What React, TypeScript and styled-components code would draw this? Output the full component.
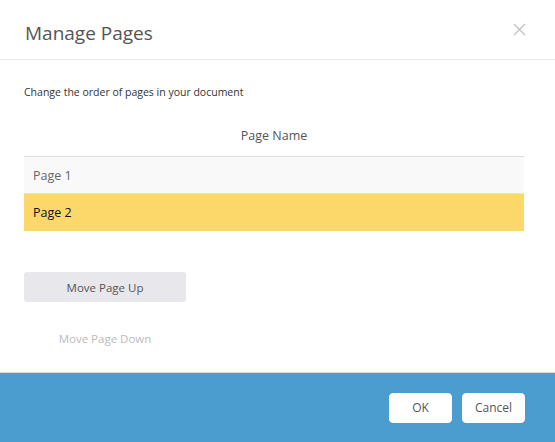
import React, { useState } from 'react';
import styled, { createGlobalStyle } from 'styled-components';

const GlobalStyle = createGlobalStyle`
  html, body {
    margin: 0;
    padding: 0;
    background: #ffffff;
  }

  body {
    font-family: 'Open Sans', 'Noto Sans', sans-serif;
  }
`;

const Dialog = styled.div`
  display: flex;
  flex-direction: column;
  height: 442px;
  width: 555px;
`;

const Header = styled.header`
  align-items: center;
  border-bottom: 1px solid #e9e9e9;
  display: flex;
  height: 60px;
  justify-content: space-between;
  padding: 0 29px 0 25px;
  box-sizing: border-box;
`;

const Title = styled.h1`
  color: #555555;
  font-size: 19px;
  font-weight: 400;
  margin: 0;
  padding-top: 6px;
`;

const CloseButton = styled.button`
  background: none;
  border: none;
  cursor: pointer;
  display: flex;
  padding: 0;
`;

const Body = styled.section`
  display: flex;
  flex: 1;
  flex-direction: column;
  padding: 0 31px 0 24px;
`;

const Description = styled.p`
  color: #333333;
  font-size: 10.5px;
  margin: 25px 0 0;
`;

const Table = styled.div`
  display: flex;
  flex-direction: column;
  margin-top: 28px;
`;

const HeadCell = styled.div`
  border-bottom: 1px solid #dddddd;
  color: #555555;
  font-size: 12.5px;
  padding-bottom: 12px;
  text-align: center;
`;

const Row = styled.div<{ selected?: boolean }>`
  align-items: center;
  background: ${props => (props.selected ? '#fcd86b' : '#f9f9f9')};
  border-bottom: 1px solid ${props => (props.selected ? '#fcd86b' : '#e2e2e2')};
  color: ${props => (props.selected ? '#111111' : '#666666')};
  cursor: pointer;
  display: flex;
  font-size: 12.5px;
  height: 36px;
  padding-left: 9px;
`;

const Actions = styled.div`
  display: flex;
  flex-direction: column;
  gap: 21px;
  margin-top: 41px;
  width: 162px;
`;

const ActionButton = styled.button<{ disabled?: boolean }>`
  background: ${props => (props.disabled ? 'transparent' : '#e8e7ec')};
  border: none;
  border-radius: 3px;
  color: ${props => (props.disabled ? '#bbbbbb' : '#555555')};
  font-family: inherit;
  font-size: 11.5px;
  height: 30px;
  padding: 0;
`;

const Footer = styled.footer`
  align-items: center;
  background: #4b9ccf;
  border-top: 1px solid #d9d9d9;
  display: flex;
  gap: 10px;
  height: 70px;
  justify-content: flex-end;
  padding-right: 30px;
  box-sizing: border-box;
`;

const FooterButton = styled.button`
  background: #ffffff;
  border: 1px solid #ffffff;
  border-radius: 4px;
  color: #555555;
  font-family: inherit;
  font-size: 12px;
  height: 30px;
  padding: 0;
  width: 63px;
`;

const pages = ['Page 1', 'Page 2'];

const App: React.FC = () => {
  const [selected, setSelected] = useState<number>(1);

  return (
    <Dialog>
      <GlobalStyle />
      <Header>
        <Title>Manage Pages</Title>
        <CloseButton aria-label="Close">
          <svg width="13" height="13" viewBox="0 0 13 13">
            <path d="M1 1 L12 12 M12 1 L1 12" stroke="#c4c4c4" strokeWidth="1.4" />
          </svg>
        </CloseButton>
      </Header>
      <Body>
        <Description>Change the order of pages in your document</Description>
        <Table>
          <HeadCell>Page Name</HeadCell>
          {pages.map((page, i) => (
            <Row key={page} selected={i === selected} onClick={() => setSelected(i)}>
              {page}
            </Row>
          ))}
        </Table>
        <Actions>
          <ActionButton>Move Page Up</ActionButton>
          <ActionButton disabled>Move Page Down</ActionButton>
        </Actions>
      </Body>
      <Footer>
        <FooterButton>OK</FooterButton>
        <FooterButton>Cancel</FooterButton>
      </Footer>
    </Dialog>
  );
};

export default App;
